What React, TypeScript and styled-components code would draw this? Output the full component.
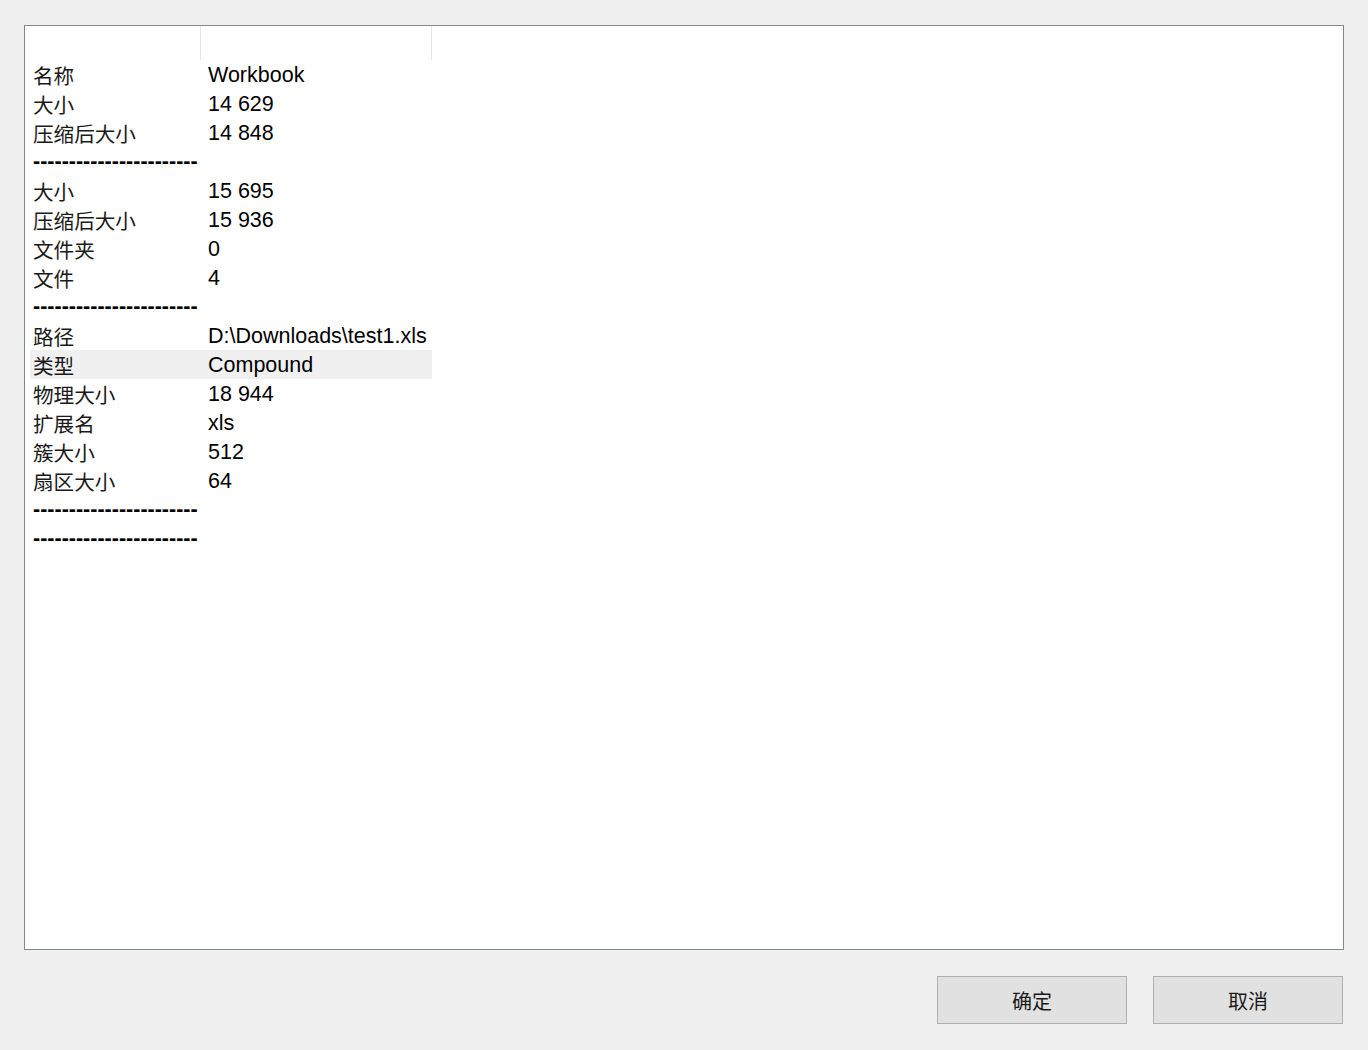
import styled, { createGlobalStyle } from "styled-components";

const GlobalStyle = createGlobalStyle`
    html, body {
        margin: 0;
        padding: 0;
        background: #f0f0f0;
    }
    body {
        font-family: "Liberation Sans", "Noto Sans CJK SC", sans-serif;
        color: #000;
    }
`;

type Row = { label: string; value?: string; selected?: boolean; rule?: boolean };

const DASHES = "-".repeat(23);

const rows: Row[] = [
    { label: "名称", value: "Workbook" },
    { label: "大小", value: "14 629" },
    { label: "压缩后大小", value: "14 848" },
    { label: DASHES, rule: true },
    { label: "大小", value: "15 695" },
    { label: "压缩后大小", value: "15 936" },
    { label: "文件夹", value: "0" },
    { label: "文件", value: "4" },
    { label: DASHES, rule: true },
    { label: "路径", value: "D:\\Downloads\\test1.xls" },
    { label: "类型", value: "Compound", selected: true },
    { label: "物理大小", value: "18 944" },
    { label: "扩展名", value: "xls" },
    { label: "簇大小", value: "512" },
    { label: "扇区大小", value: "64" },
    { label: DASHES, rule: true },
    { label: DASHES, rule: true },
];

function App() {
    return (
        <Style_Page>
            <GlobalStyle />
            <Style_ListPanel>
                <Style_Header>
                    <Style_HeaderCell $width={171} />
                    <Style_HeaderCell $width={231} />
                </Style_Header>
                {rows.map((row, i) => (
                    <Style_Row key={i} $selected={row.selected}>
                        <Style_Label $rule={row.rule}>{row.label}</Style_Label>
                        <Style_Value>{row.value ?? ""}</Style_Value>
                    </Style_Row>
                ))}
            </Style_ListPanel>

            <Style_Footer>
                <Style_Button>确定</Style_Button>
                <Style_Button>取消</Style_Button>
            </Style_Footer>
        </Style_Page>
    );
}

export default App;

const Style_Page = styled.div`
    width: 1368px;
    height: 1050px;
    box-sizing: border-box;
    padding: 25px 24px 0 24px;
    display: flex;
    flex-direction: column;
`;

const Style_ListPanel = styled.div`
    width: 1320px;
    height: 925px;
    box-sizing: border-box;
    background: #ffffff;
    border: 1px solid #828790;
    padding-left: 5px;
    display: flex;
    flex-direction: column;
`;

const Style_Header = styled.div`
    display: flex;
    height: 34px;
    flex-shrink: 0;
`;

const Style_HeaderCell = styled.div<{ $width: number }>`
    width: ${(p) => p.$width}px;
    border-right: 1px solid #e5e5e5;
    box-sizing: border-box;
`;

const Style_Row = styled.div<{ $selected?: boolean }>`
    display: flex;
    align-items: center;
    width: 402px;
    height: 29px;
    flex-shrink: 0;
    background: ${(p) => (p.$selected ? "#f0f0f0" : "transparent")};
    font-size: 21.5px;
    white-space: nowrap;
`;

const Style_Label = styled.div<{ $rule?: boolean }>`
    width: 171px;
    padding-left: 3px;
    box-sizing: border-box;
    font-family: "Liberation Sans", "Noto Sans CJK SC", sans-serif;
    font-size: ${(p) => (p.$rule ? "21.5px" : "20.6px")};
    font-weight: ${(p) => (p.$rule ? 700 : 400)};
    color: ${(p) => (p.$rule ? "#000" : "#1a1a1a")};
    overflow: hidden;
`;

const Style_Value = styled.div`
    width: 231px;
    padding-left: 7px;
    box-sizing: border-box;
    font-family: "Liberation Sans", "Noto Sans CJK SC", sans-serif;
    margin-top: 1px;
    overflow: hidden;
`;

const Style_Footer = styled.div`
    display: flex;
    justify-content: flex-end;
    gap: 26px;
    padding-top: 26px;
    padding-right: 1px;
`;

const Style_Button = styled.button`
    width: 190px;
    height: 48px;
    background: #e1e1e1;
    border: 1px solid #adadad;
    border-radius: 0;
    font-family: "Noto Sans CJK SC", sans-serif;
    font-size: 20px;
    color: #1a1a1a;
    padding: 0;
    cursor: default;
`;
